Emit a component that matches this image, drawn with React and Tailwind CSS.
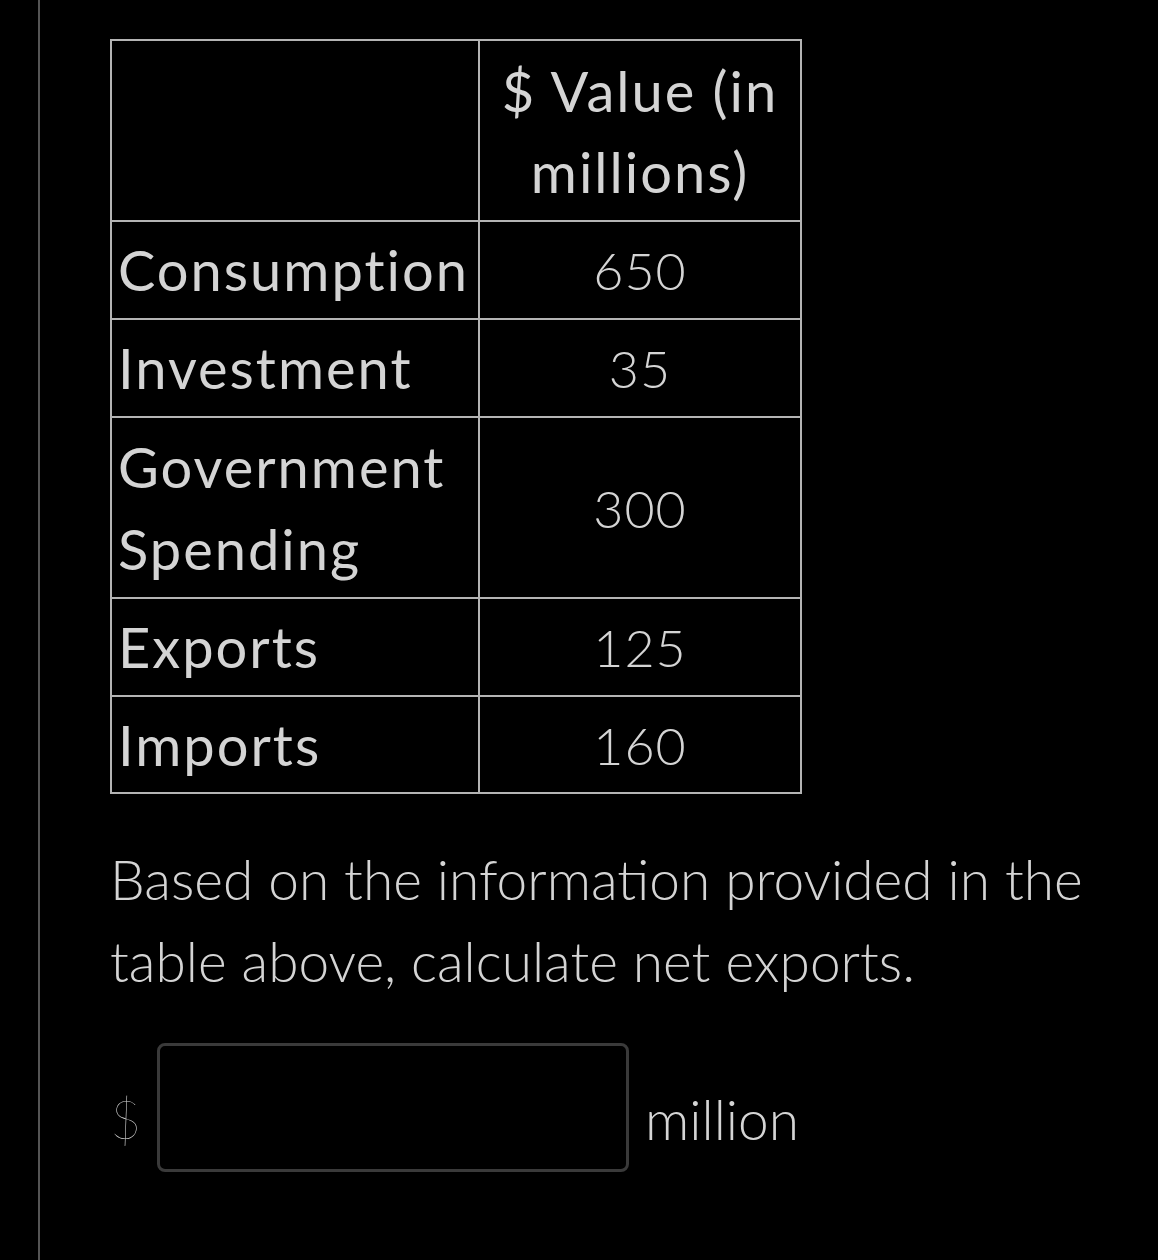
import React from "react";

const rows = [
    { label: "Consumption", value: "650", h: "h-[98px]" },
    { label: "Investment", value: "35", h: "h-[98px]" },
    { label: "Government Spending", value: "300", h: "h-[181px]" },
    { label: "Exports", value: "125", h: "h-[98px]" },
    { label: "Imports", value: "160", h: "h-[97px]" },
];

export default function App() {
    return (
        <div className="min-h-[1260px] w-[1158px] bg-black text-[#d4d4d4] font-['Lato',sans-serif] flex">
            <div className="w-[40px] border-r-2 border-[#555]" />
            <div className="pl-[70px] pt-[39px]">
                <table className="border-collapse">
                    <tbody>
                        <tr className="h-[181px]">
                            <td className="w-[368px] border-2 border-[#b4b4b4]"></td>
                            <td className="w-[322px] border-2 border-[#b4b4b4] text-center text-[56px] leading-[81px] tracking-[2px]">
                                $ Value (in millions)
                            </td>
                        </tr>
                        {rows.map((r) => (
                            <tr key={r.label} className={r.h}>
                                <td className="border-2 border-[#b4b4b4] pl-[6px] text-[56px] leading-[82px] tracking-[2px]">
                                    {r.label}
                                </td>
                                <td className="border-2 border-[#b4b4b4] text-center text-[52px] font-light leading-[82px] tracking-[1px]">
                                    {r.value}
                                </td>
                            </tr>
                        ))}
                    </tbody>
                </table>
                <p className="mt-[44px] w-[1020px] text-[55px] font-light leading-[82px]">
                    Based on the information provided in the table above, calculate net exports.
                </p>
                <div className="mt-[41px] flex items-center">
                    <span className="mt-[22px] text-[54px] font-extralight w-[47px]">$</span>
                    <div className="w-[472px] h-[129px] border-[3px] border-[#3a3a3a] rounded-[8px]" />
                    <span className="mt-[24px] ml-[16px] text-[55px] font-light">million</span>
                </div>
            </div>
        </div>
    );
}
